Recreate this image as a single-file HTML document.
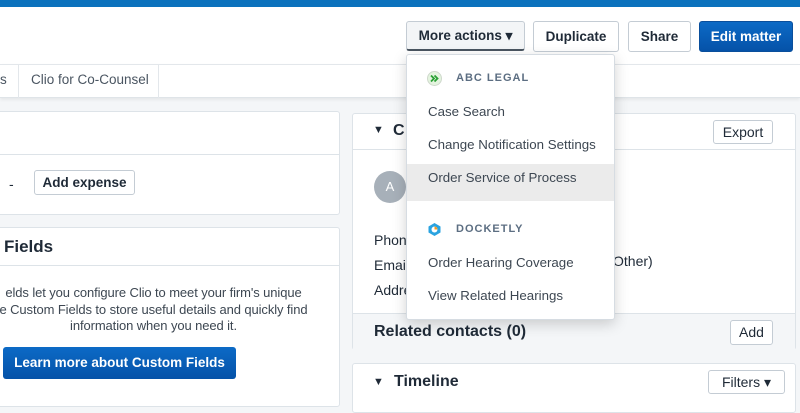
<!DOCTYPE html>
<html><head><style>
*{box-sizing:border-box;margin:0;padding:0}
body{width:800px;height:400px;overflow:hidden;background:#f4f6f8;font-family:"Liberation Sans",sans-serif;color:#1f2a37;position:relative}
.a{position:absolute}
.btn{position:absolute;border:1px solid #c4ccd4;border-radius:3px;background:#fff;font-size:14px;font-weight:bold;color:#1f2a37;text-align:center}
.card{position:absolute;background:#fff;border:1px solid #dde3e8;border-radius:3px}
.hr{position:absolute;left:0;right:0;height:1px;background:#dde3e8}
.mi{position:absolute;left:21px;font-size:13.3px;color:#3d4752;white-space:nowrap}
.sec{position:absolute;left:49px;font-size:11px;font-weight:bold;color:#5c6e82;letter-spacing:1px}
</style></head><body>
<div class="a" style="left:0;top:0;width:800px;height:7px;background:#0b72bd"></div>
<div class="a" style="left:0;top:7px;width:800px;height:57px;background:#fff"></div>
<div class="a" style="left:0;top:64px;width:800px;height:34px;background:#fff;border-top:1px solid #e3e7eb;border-bottom:1px solid #dfe4e8;box-shadow:0 2px 3px rgba(0,0,0,.06)"></div>
<div class="a" style="left:0;top:72px;font-size:13.5px;color:#4a5561">s</div>
<div class="a" style="left:18px;top:65px;width:1px;height:33px;background:#e3e7eb"></div>
<div class="a" style="left:31px;top:72px;font-size:13.5px;color:#4a5561">Clio for Co-Counsel</div>
<div class="a" style="left:158px;top:65px;width:1px;height:33px;background:#e3e7eb"></div>

<div class="btn" style="left:406px;top:21px;width:119px;height:30px;line-height:28px;background:#f3f5f7;border-bottom:2px solid #4a5561;font-size:13.5px">More actions ▾</div>
<div class="btn" style="left:533px;top:21px;width:86px;height:31px;line-height:29px;font-size:13.5px">Duplicate</div>
<div class="btn" style="left:628px;top:21px;width:63px;height:31px;line-height:29px;font-size:13.5px">Share</div>
<div class="btn" style="left:699px;top:21px;width:94px;height:31px;line-height:29px;background:linear-gradient(#0c6ac6,#0552a8);color:#fff;border-color:#0a4f9c;font-size:13.5px">Edit matter</div>

<div class="card" style="left:-5px;top:111px;width:345px;height:104px"><div class="hr" style="top:42px"></div>
<div class="a" style="left:13px;top:64px;font-size:14px">-</div>
<div class="btn" style="left:38px;top:58px;width:101px;height:25px;line-height:23px;font-size:13.5px">Add expense</div></div>

<div class="card" style="left:-5px;top:227px;width:345px;height:180px"><div class="hr" style="top:37px"></div>
<div class="a" style="left:8px;top:9px;font-size:17px;font-weight:bold">Fields</div>
<div class="a" style="left:-10px;top:57px;width:335px;font-size:13px;line-height:16.5px;text-align:center;color:#3d4752;white-space:nowrap;letter-spacing:-0.1px">elds let you configure Clio to meet your firm's unique<br>e Custom Fields to store useful details and quickly find<br>information when you need it.</div>
<div class="a" style="left:7px;top:119px;width:233px;height:32px;border-radius:3px;background:linear-gradient(#0c6ac6,#0552a8);color:#fff;font-weight:bold;font-size:13.5px;line-height:32px;text-align:center">Learn more about Custom Fields</div></div>

<div class="card" style="left:352px;top:113px;width:444px;height:237px"><div class="hr" style="top:35px"></div>
<div class="a" style="left:20px;top:10px;font-size:11px">▼</div>
<div class="a" style="left:40px;top:8px;font-size:16px;font-weight:bold">C</div>
<div class="btn" style="left:360px;top:6px;width:60px;height:24px;line-height:22px;font-weight:normal">Export</div>
<div class="a" style="left:21px;top:57px;width:32px;height:32px;border-radius:50%;background:#a7b0b9;color:#fff;font-size:13px;text-align:center;line-height:32px">A</div>
<div class="a" style="left:21px;top:114px;font-size:14px;line-height:25px">Phone<br>Email<br>Address</div>
<div class="a" style="left:260px;top:139px;font-size:14px">Other)</div>
<div class="a" style="left:0;top:199px;width:442px;height:37px;background:#f4f6f8;border-top:1px solid #dde3e8"></div>
<div class="a" style="left:21px;top:209px;font-size:16px;font-weight:bold">Related contacts (0)</div>
<div class="btn" style="left:377px;top:206px;width:43px;height:25px;line-height:23px;font-weight:normal">Add</div></div>

<div class="card" style="left:352px;top:363px;width:444px;height:50px">
<div class="a" style="left:20px;top:12px;font-size:11px">▼</div>
<div class="a" style="left:41px;top:9px;font-size:16px;font-weight:bold">Timeline</div>
<div class="btn" style="left:355px;top:6px;width:77px;height:24px;line-height:22px;font-weight:normal">Filters ▾</div></div>

<div class="a" style="left:406px;top:54px;width:209px;height:266px;background:#fff;border:1px solid #d6dce2;border-radius:3px;box-shadow:0 4px 14px rgba(0,0,0,.18)">
<svg class="a" style="left:20px;top:16px" width="15" height="15" viewBox="0 0 15 15"><circle cx="7.5" cy="7.5" r="7" fill="#e4f4df" stroke="#cfd8cc"/><path d="M4 4.5l3 3-3 3M7.5 4.5l3 3-3 3" stroke="#2aa034" stroke-width="1.8" fill="none"/></svg>
<div class="sec" style="top:17px">ABC LEGAL</div>
<div class="mi" style="top:49px">Case Search</div>
<div class="mi" style="top:82px">Change Notification Settings</div>
<div class="a" style="left:0;top:109px;width:207px;height:37px;background:#ebebeb"></div>
<div class="mi" style="top:115px">Order Service of Process</div>
<svg class="a" style="left:20px;top:167px" width="15" height="15" viewBox="0 0 15 15"><path d="M7.5 1l6 3.5v6l-6 3.5-6-3.5v-6z" fill="#2aa3e0"/><circle cx="7.5" cy="7.5" r="3" fill="#fff"/><path d="M7.5 4.5a3 3 0 0 1 3 3h-3z" fill="#f39a1f"/></svg>
<div class="sec" style="top:168px">DOCKETLY</div>
<div class="mi" style="top:200px">Order Hearing Coverage</div>
<div class="mi" style="top:233px">View Related Hearings</div>
</div>
</body></html>
